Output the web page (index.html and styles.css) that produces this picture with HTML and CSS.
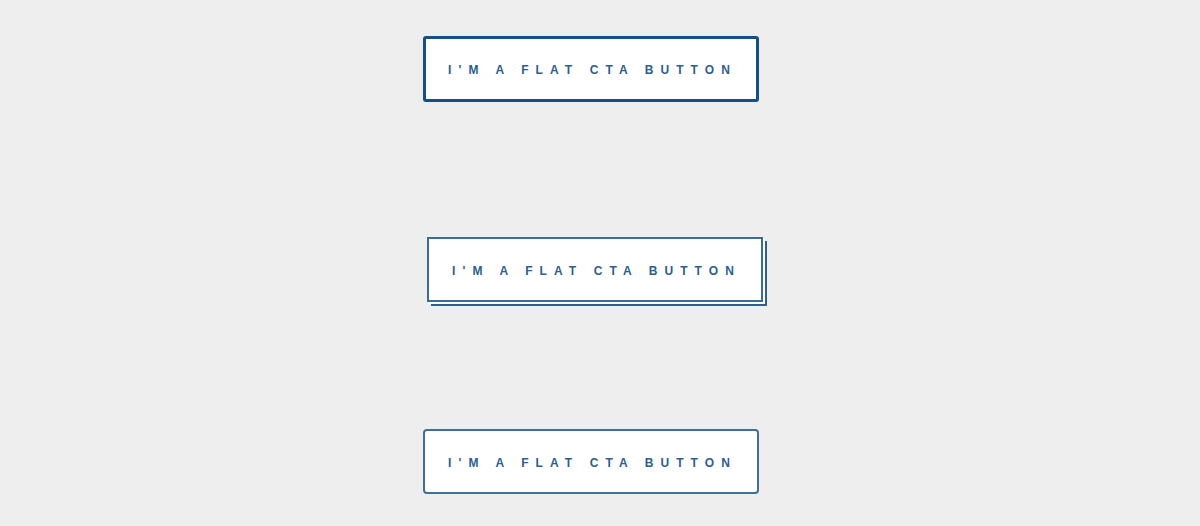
FILE: index.html
```html
<!DOCTYPE html>
<html lang="en">
<head>
    <meta charset="UTF-8">
    <meta name="viewport" content="width=device-width, initial-scale=1.0">
    <title>Flat CTA Buttons</title>
    <link rel="stylesheet" href="styles.css">
</head>
<body>
    <div class="button-list">
        <!-- Default -->
        <button class="cta-btn cta-thick">I'm a flat CTA button</button>

        <!-- Pressed / stacked -->
        <button class="cta-btn cta-stacked">I'm a flat CTA button</button>

        <!-- Rounded thin -->
        <button class="cta-btn cta-thin">I'm a flat CTA button</button>
    </div>
</body>
</html>
```

FILE: styles.css
```css
/* General Styles */
body {
    margin: 0;
    padding: 0;
    background-color: #eeeeee;
    font-family: "Liberation Sans", Arial, sans-serif;
}

.button-list {
    display: flex;
    flex-direction: column;
    align-items: center;
    gap: 131px;
    padding: 36px 19px 0 0;
}

.cta-btn {
    box-sizing: border-box;
    width: 336px;
    height: 65px;
    padding: 2px 0 0 4px;
    background: white;
    color: #2d5e90;
    font-family: inherit;
    font-size: 12px;
    font-weight: bold;
    text-transform: uppercase;
    letter-spacing: 0.59em;
    cursor: pointer;
}

.cta-thick {
    height: 66px;
    border: 3px solid #174e87;
    border-radius: 3px;
}

.cta-stacked {
    border: 2px solid #3b6b99;
    border-radius: 0;
    box-shadow: 2px 2px 0 white, 4px 4px 0 #2f5f8e;
    transform: translate(4px, 4px);
}

.cta-thin {
    border: 2px solid #406f9c;
    border-radius: 4px;
}
```
